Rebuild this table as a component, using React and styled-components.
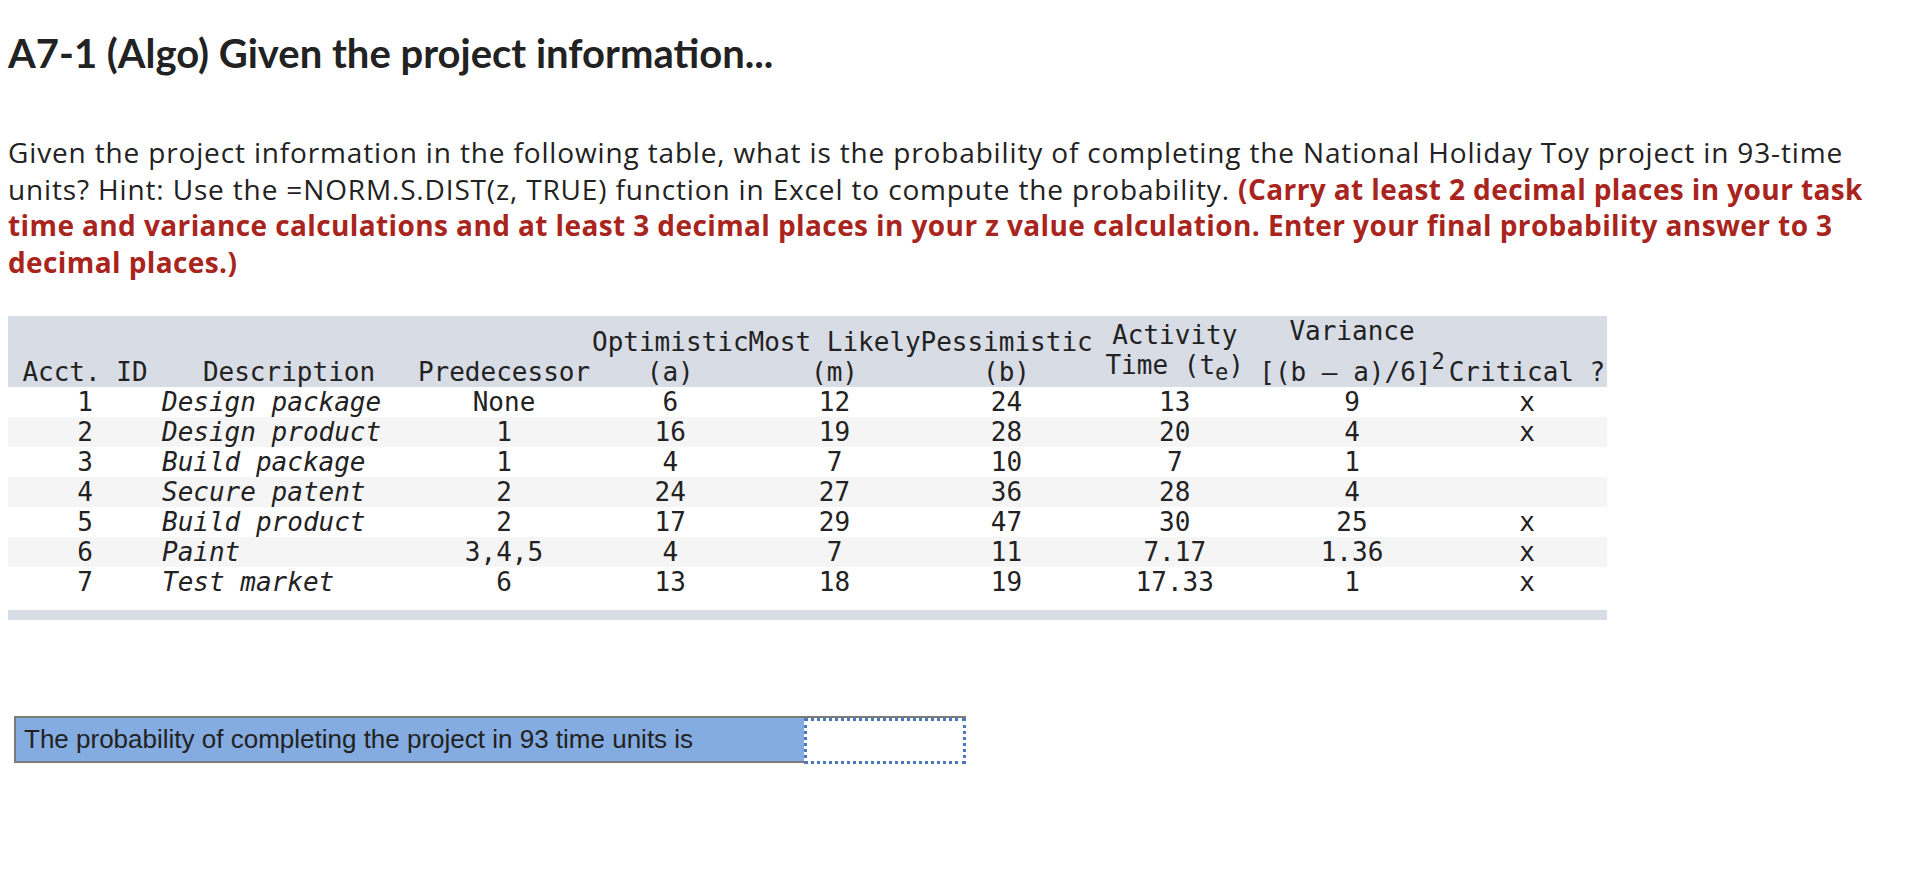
import styled, { createGlobalStyle } from "styled-components";

const GlobalStyle = createGlobalStyle`
  body {
    margin: 0;
    background: #fff;
    color: #222;
  }
`;

const Page = styled.main`
  padding: 25px 8px 40px 8px;
  font-family: Lato, "Open Sans", sans-serif;
`;

const Title = styled.h1`
  margin: 0;
  font-size: 40px;
  font-weight: 700;
  line-height: 56px;
  color: #222;
`;

const Prompt = styled.p`
  margin: 53px 0 0 0;
  font-family: "Open Sans", Lato, sans-serif;
  font-size: 28px;
  line-height: 36.5px;
  letter-spacing: 0.85px;
  white-space: nowrap;
  color: #222;
`;

const Warn = styled.strong`
  color: #a8241c;
  font-weight: 700;
  letter-spacing: 0.4px;
`;

const Table = styled.table`
  margin-top: 36px;
  border-collapse: collapse;
  border-spacing: 0;
  table-layout: fixed;
  width: 1599px;
  font-family: "DejaVu Sans Mono", "Liberation Mono", monospace;
  font-size: 26px;
  line-height: 30px;
  color: #222;

  sup {
    font-size: 0.85em;
    line-height: 30px;
    vertical-align: 12px;
  }

  sub {
    font-size: 0.85em;
    line-height: 30px;
  }
`;

const Col = styled.col`
  width: ${(p) => p.$w}px;
`;

const Head = styled.thead`
  background: #d8dce5;
`;

const Th = styled.th`
  padding: 0;
  font-weight: 400;
  text-align: center;
  vertical-align: bottom;
  white-space: nowrap;
`;

const Row = styled.tr`
  height: 30px;
  &:nth-child(even) {
    background: #f5f5f5;
  }
`;

const Td = styled.td`
  padding: 0;
  white-space: nowrap;
  text-align: ${(p) => (p.$left ? "left" : "center")};
  font-style: ${(p) => (p.$italic ? "italic" : "normal")};
`;

const Spacer = styled.td`
  height: ${(p) => p.$h}px;
  padding: 0;
  background: ${(p) => p.$bg || "transparent"};
`;

const AnswerRow = styled.div`
  display: flex;
  width: 952px;
  margin: 96px 0 0 6px;
  border-top: 2px solid #7b7b7b;
`;

const Question = styled.div`
  display: flex;
  align-items: center;
  box-sizing: border-box;
  width: 790px;
  height: 45px;
  padding: 0 8px;
  background: #84ace0;
  border-left: 2px solid #7b7b7b;
  border-bottom: 2px solid #7b7b7b;
  font-family: "Liberation Sans", Arial, sans-serif;
  font-size: 26px;
  color: #222;
`;

const Blank = styled.input`
  box-sizing: border-box;
  width: 162px;
  height: 46px;
  margin: 0;
  border: 3px dotted #4a79c1;
  background: #fff;
  font-family: "Liberation Sans", Arial, sans-serif;
  font-size: 20px;
  outline: none;
`;

const widths = [154, 254, 176, 156.5, 172, 172, 164.5, 190, 160];

const rows = [
  ["1", "Design package", "None", "6", "12", "24", "13", "9", "x"],
  ["2", "Design product", "1", "16", "19", "28", "20", "4", "x"],
  ["3", "Build package", "1", "4", "7", "10", "7", "1", ""],
  ["4", "Secure patent", "2", "24", "27", "36", "28", "4", ""],
  ["5", "Build product", "2", "17", "29", "47", "30", "25", "x"],
  ["6", "Paint", "3,4,5", "4", "7", "11", "7.17", "1.36", "x"],
  ["7", "Test market", "6", "13", "18", "19", "17.33", "1", "x"],
];

export default function App() {
  return (
    <>
      <GlobalStyle />
      <Page>
        <Title>A7-1 (Algo) Given the project information...</Title>
        <Prompt>
          Given the project information in the following table, what is the probability of completing the
          National Holiday Toy project in 93-time
          <br />
          units? Hint: Use the =NORM.S.DIST(z, TRUE) function in Excel to compute the probability.{" "}
          <Warn>
            (Carry at least 2 decimal places in your task
            <br />
            time and variance calculations and at least 3 decimal places in your z value calculation. Enter
            your final probability answer to 3
            <br />
            decimal places.)
          </Warn>
        </Prompt>

        <Table>
          <colgroup>
            {widths.map((w, i) => (
              <Col key={i} $w={w} />
            ))}
          </colgroup>
          <Head>
            <tr>
              <Th>Acct. ID</Th>
              <Th>Description</Th>
              <Th>Predecessor</Th>
              <Th>
                Optimistic
                <br />
                (a)
              </Th>
              <Th>
                Most Likely
                <br />
                (m)
              </Th>
              <Th>
                Pessimistic
                <br />
                (b)
              </Th>
              <Th>
                Activity
                <br />
                Time (t<sub>e</sub>)
              </Th>
              <Th>
                Variance
                <br />
                [(b – a)/6]<sup>2</sup>
              </Th>
              <Th>Critical ?</Th>
            </tr>
          </Head>
          <tbody>
            {rows.map((r) => (
              <Row key={r[0]}>
                {r.map((cell, i) => (
                  <Td key={i} $left={i === 1} $italic={i === 1}>
                    {cell}
                  </Td>
                ))}
              </Row>
            ))}
          </tbody>
          <tfoot>
            <tr>
              <Spacer colSpan={9} $h={13} />
            </tr>
            <tr>
              <Spacer colSpan={9} $h={10} $bg="#d8dce5" />
            </tr>
          </tfoot>
        </Table>

        <AnswerRow>
          <Question>The probability of completing the project in 93 time units is</Question>
          <Blank type="text" aria-label="probability" />
        </AnswerRow>
      </Page>
    </>
  );
}
